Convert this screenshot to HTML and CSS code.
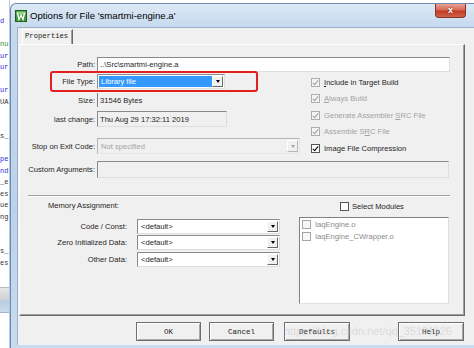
FILE: index.html
```html
<!DOCTYPE html>
<html lang="en">
<head>
    <meta charset="UTF-8">
    <title>Options for File 'smartmi-engine.a'</title>
    <link rel="stylesheet" href="styles.css">
</head>
<body>

<div class="editor">
    <div class="ln kw">d</div>
    <div class="ln"></div>
    <div class="ln cm">nu</div>
    <div class="ln kw">ur</div>
    <div class="ln kw">ur</div>
    <div class="ln"></div>
    <div class="ln kw">ur</div>
    <div class="ln tx">UA</div>
    <div class="ln"></div>
    <div class="ln"></div>
    <div class="ln tx">s_</div>
    <div class="ln"></div>
    <div class="ln kw">pe</div>
    <div class="ln kw">nd</div>
    <div class="ln tx">_e</div>
    <div class="ln tx">es</div>
    <div class="ln tx">ue</div>
    <div class="ln tx">ng</div>
    <div class="ln"></div>
    <div class="ln"></div>
    <div class="ln tx">s_</div>
    <div class="ln tx">es</div>
    <div class="editor-bar"></div>
</div>

<div class="window">
    <div class="titlebar">
        <svg class="app-icon" width="12" height="12" viewBox="0 0 12 12">
            <rect x="0.5" y="0.5" width="11" height="11" fill="#3f9a3a" stroke="#1f5c1c"/>
            <rect x="1.5" y="1.5" width="9" height="3" fill="#8fd07f"/>
            <polyline points="2.5,3 4,9.5 6,5 8,9.5 9.5,3" fill="none" stroke="#fff" stroke-width="1.3"/>
        </svg>
        <span class="title">Options for File 'smartmi-engine.a'</span>
        <div class="close">x</div>
    </div>

    <div class="client">
        <div class="tabs">
            <div class="tab">Properties</div>
        </div>

        <div class="page">
            <div class="row path-row">
                <label class="lbl">Path:</label>
                <div class="field path">..\Src\smartmi-engine.a</div>
            </div>

            <div class="upper">
                <div class="upper-left">
                    <div class="row type-row">
                        <label class="lbl">File Type:</label>
                        <div class="combo type">
                            <div class="val selected">Library file</div>
                            <div class="drop"><i></i></div>
                        </div>
                    </div>
                    <div class="row size-row">
                        <label class="lbl">Size:</label>
                        <div class="static">31546 Bytes</div>
                    </div>
                    <div class="row change-row">
                        <label class="lbl">last change:</label>
                        <div class="field ro change">Thu Aug 29 17:32:11 2019</div>
                    </div>
                    <div class="row stop-row">
                        <label class="lbl">Stop on Exit Code:</label>
                        <div class="combo disabled stop">
                            <div class="val">Not specified</div>
                            <div class="drop"><i></i></div>
                        </div>
                    </div>
                </div>

                <div class="checks">
                    <div class="check"><span class="cb off on"></span><span><u>I</u>nclude in Target Build</span></div>
                    <div class="check dim"><span class="cb off on"></span><span><u>A</u>lways Build</span></div>
                    <div class="check dim"><span class="cb off on"></span><span>Generate Assembler <u>S</u>RC File</span></div>
                    <div class="check dim"><span class="cb off on"></span><span>Assemble S<u>R</u>C File</span></div>
                    <div class="check"><span class="cb on"></span><span>Image File Compression</span></div>
                </div>
            </div>

            <div class="row args-row">
                <label class="lbl">Custom Arguments:</label>
                <div class="field ro args"></div>
            </div>

            <div class="sep"></div>

            <div class="lower">
                <div class="memory">
                    <div class="mem-title">Memory Assignment:</div>
                    <div class="row mem-row first">
                        <label class="lbl">Code / Const:</label>
                        <div class="combo mem"><div class="val">&lt;default&gt;</div><div class="drop"><i></i></div></div>
                    </div>
                    <div class="row mem-row">
                        <label class="lbl">Zero Initialized Data:</label>
                        <div class="combo mem"><div class="val">&lt;default&gt;</div><div class="drop"><i></i></div></div>
                    </div>
                    <div class="row mem-row last">
                        <label class="lbl">Other Data:</label>
                        <div class="combo mem"><div class="val">&lt;default&gt;</div><div class="drop"><i></i></div></div>
                    </div>
                </div>

                <div class="modules">
                    <div class="check select-row"><span class="cb"></span><span>Select Modules</span></div>
                    <div class="listbox">
                        <div class="item"><span class="cb dim-box"></span><span>IaqEngine.o</span></div>
                        <div class="item"><span class="cb dim-box"></span><span>IaqEngine_CWrapper.o</span></div>
                    </div>
                </div>
            </div>

            <div class="mark"></div>
        </div>

        <div class="buttons">
            <button class="btn ok">OK</button>
            <button class="btn cancel">Cancel</button>
            <button class="btn defaults">Defaults</button>
            <button class="btn help">Help</button>
        </div>

        <div class="watermark">https://blog.csdn.net/qq_35181126</div>
    </div>
</div>

</body>
</html>
```

FILE: styles.css
```css
* {
    box-sizing: border-box;
}
body {
    margin: 0;
    width: 474px;
    height: 348px;
    overflow: hidden;
    display: flex;
    background: #fff;
    font-family: "Liberation Sans", Arial, sans-serif;
    font-size: 7.6px;
    color: #1e1e1e;
}

/* code editor peeking out behind the dialog */
.editor {
    flex: none;
    width: 10px;
    display: flex;
    flex-direction: column;
    padding-top: 16px;
    overflow: hidden;
    font-family: "Liberation Mono", monospace;
    font-size: 7px;
    border-right: 1px solid #b4c8df;
}
.editor .ln {
    height: 11.5px;
    line-height: 11.5px;
    white-space: nowrap;
}
.kw { color: #2b2bd3; }
.cm { color: #2b8a2b; }
.tx { color: #333; }
.editor-bar {
    margin-top: 18px;
    height: 26px;
    background: linear-gradient(#e6e6e6, #d2d2d2 45%, #b8cce2 55%, #cadaeb);
    border-top: 1px solid #b8b8b8;
    border-bottom: 1px solid #9fb3ca;
}

/* dialog window */
.window {
    flex: none;
    width: 464px;
    height: 346px;
    margin-top: 3px;
    border: 1px solid #6f8aab;
    border-right: none;
    border-bottom: none;
    border-radius: 6px 0 0 0;
    background: linear-gradient(#dde9f6, #c5d9ee 23px, #bcd2ea 60%, #c8dcf0);
    display: flex;
    flex-direction: column;
}
.titlebar {
    height: 23px;
    display: flex;
    align-items: center;
    padding-left: 4px;
}
.app-icon {
    flex: none;
}
.title {
    margin-left: 3px;
    font-size: 9.6px;
    color: #000;
}
.close {
    align-self: flex-start;
    margin-left: auto;
    margin-right: 8px;
    width: 31px;
    height: 14px;
    border: 1px solid #8a3225;
    border-top: none;
    border-radius: 0 0 4px 4px;
    background: linear-gradient(#eaa396, #d66a56 45%, #c13c25 55%, #d0604a);
    color: #fff;
    font-weight: bold;
    font-size: 9px;
    line-height: 12px;
    text-align: center;
    text-shadow: 0 0 2px #5a160c;
}

.client {
    position: relative;
    margin-left: 6px;
    height: 318px;
    background: #f0f0f0;
    border-top: 1px solid #9cb0c8;
    border-left: 1px solid #9cb0c8;
    padding: 1px 0 0 1px;
}
.tabs {
    display: flex;
    margin-left: 3px;
}
.tab {
    width: 51px;
    height: 15px;
    padding-left: 2px;
    border-top: 1px solid #fff;
    border-left: 1px solid #fff;
    border-right: 1px solid #696969;
    box-shadow: inset -1px 0 #a0a0a0;
    font-family: "Liberation Mono", monospace;
    font-size: 7.2px;
    line-height: 13px;
    color: #222;
}
.page {
    position: relative;
    width: 446px;
    height: 272px;
    padding-top: 12px;
    border: 1px solid;
    border-color: #fff #696969 #696969 #fff;
    box-shadow: inset -1px -1px #a0a0a0;
}

.row {
    display: flex;
    align-items: center;
}
.lbl {
    flex: none;
    width: 75px;
    margin-right: 2px;
    text-align: right;
    white-space: nowrap;
}
.field {
    height: 100%;
    padding-left: 2px;
    background: #fff;
    border: 1px solid;
    border-color: #8a8a8a #dedede #dedede #8a8a8a;
    display: flex;
    align-items: center;
    white-space: nowrap;
}
.field.ro {
    background: #f0f0f0;
}
.path-row { height: 15px; }
.path { width: 353px; }

.upper {
    display: flex;
}
.upper-left {
    width: 291px;
}
.type-row { margin-top: 2px; height: 15px; }
.size-row { margin-top: 4px; height: 14px; }
.change-row { margin-top: 4px; height: 16px; }
.stop-row { margin-top: 11px; height: 16px; }
.args-row { margin-top: 4px; height: 17px; }
.change { width: 130px; }
.args { width: 352px; }
.static {
    height: 100%;
    width: 120px;
    padding-left: 2px;
    border-left: 1px solid #828282;
    display: flex;
    align-items: center;
}

.combo {
    height: 100%;
    display: flex;
    align-items: center;
    padding: 1px;
    background: #fff;
    border: 1px solid;
    border-color: #8a8a8a #dedede #dedede #8a8a8a;
}
.combo .val {
    flex: 1;
    height: 100%;
    padding-left: 2px;
    display: flex;
    align-items: center;
    white-space: nowrap;
}
.combo .val.selected {
    background: #3399ff;
    color: #fff;
}
.drop {
    flex: none;
    width: 11px;
    height: 100%;
    background: #f0f0f0;
    border: 1px solid;
    border-color: #fff #696969 #696969 #fff;
    display: flex;
    align-items: center;
    justify-content: center;
}
.drop i {
    width: 0;
    height: 0;
    border-left: 2.5px solid transparent;
    border-right: 2.5px solid transparent;
    border-top: 3px solid #000;
}
.type { width: 128px; }
.stop { width: 203px; }
.combo.disabled {
    background: #f0f0f0;
    border-color: #b5b5b5 #e6e6e6 #e6e6e6 #b5b5b5;
    color: #a3a3a3;
}
.combo.disabled .drop {
    border-color: #fff #b8b8b8 #b8b8b8 #fff;
}
.combo.disabled .drop i {
    border-top-color: #a5a5a5;
}

/* checkboxes */
.checks {
    padding-top: 2px;
}
.check {
    height: 16.5px;
    display: flex;
    align-items: center;
    gap: 4px;
    white-space: nowrap;
}
.check.dim {
    color: #a3a3a3;
}
.cb {
    flex: none;
    width: 9px;
    height: 9px;
    border: 1px solid #555;
    background: #fff;
    position: relative;
}
.cb.on::after {
    content: "";
    position: absolute;
    left: 2px;
    top: 0px;
    width: 2px;
    height: 5px;
    border-right: 1.5px solid #000;
    border-bottom: 1.5px solid #000;
    transform: rotate(40deg);
}
.cb.off {
    border-color: #adadad;
    background: #f4f4f4;
}
.cb.off.on::after {
    border-color: #9d9d9d;
}
.cb.dim-box {
    border-color: #a5a5a5;
    background: #f7f7f7;
}

.sep {
    margin-top: 17px;
    margin-left: 8px;
    width: 422px;
    border-top: 1px solid #a0a0a0;
    border-bottom: 1px solid #fff;
}
.lower {
    display: flex;
}
.memory {
    width: 279px;
}
.mem-title {
    margin-top: 3px;
    height: 12px;
    line-height: 12px;
    padding-left: 28px;
}
.mem-row { height: 15px; margin-top: 1px; }
.mem-row.first { margin-top: 7px; }
.mem-row.last { margin-top: 2px; }
.mem-row .lbl {
    width: 107px;
    margin-right: 10px;
}
.mem { width: 143px; }

.modules {
    width: 150px;
}
.select-row {
    margin-top: 4px;
    height: 12px;
    padding-left: 41px;
    gap: 3px;
}
.listbox {
    margin-top: 4px;
    width: 150px;
    height: 87px;
    padding: 1px 0 0 2px;
    background: #fff;
    border: 1px solid;
    border-color: #828282 #e0e0e0 #e0e0e0 #828282;
}
.item {
    height: 12px;
    display: flex;
    align-items: center;
    gap: 4px;
    color: #8a8a8a;
}

/* red annotation drawn over the File Type row */
.mark {
    position: absolute;
    left: 30px;
    top: 26px;
    width: 208px;
    height: 21px;
    border: 2px solid #e3201f;
    border-radius: 3px;
}

.buttons {
    display: flex;
    margin-top: 6px;
    margin-left: 117px;
}
.btn {
    height: 19px;
    width: 65px;
    padding: 0;
    background: #f0f0f0;
    border: 1px solid #6e6e6e;
    box-shadow: inset 1px 1px #fff, inset -1px -1px #a8a8a8;
    font-family: "Liberation Mono", monospace;
    font-size: 7.5px;
    color: #222;
}
.cancel { margin-left: 8px; }
.defaults { margin-left: 10px; width: 66px; }
.help { margin-left: 48px; width: 66px; }

.watermark {
    position: absolute;
    left: 266px;
    top: 297px;
    font-size: 11px;
    color: rgba(200, 200, 200, 0.55);
    white-space: nowrap;
}
```
